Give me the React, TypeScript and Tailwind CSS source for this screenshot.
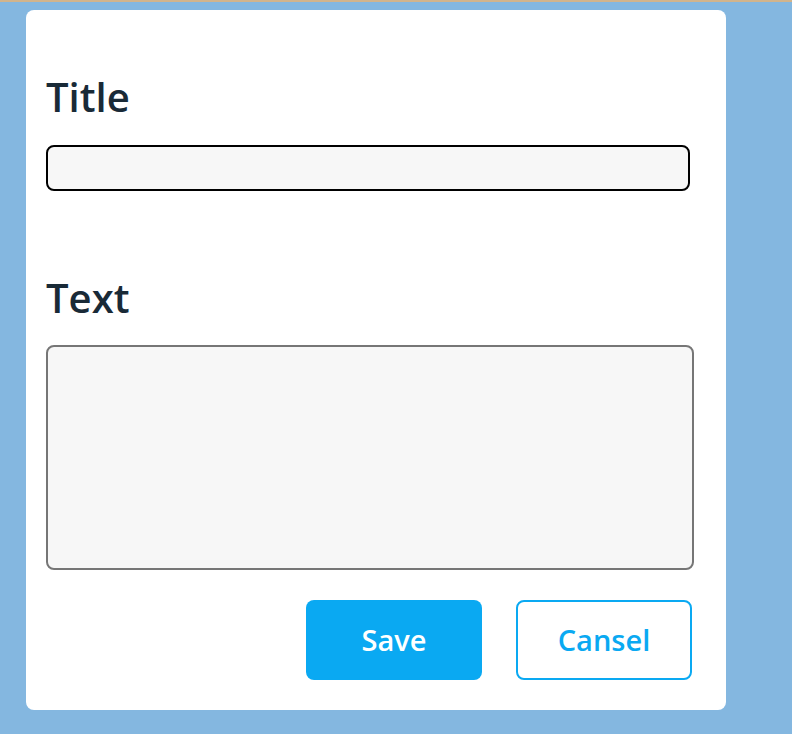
export default function App() {
  return (
    <div
      className="min-h-screen bg-[#84b7e0] border-t-2 border-[#d2b48c] pt-2 pl-[26px]"
      style={{ fontFamily: '"Open Sans", "Noto Sans", sans-serif' }}
    >
      <div className="w-[700px] h-[700px] bg-white rounded-lg pt-[67px] pl-5 pr-[34px] flex flex-col">
        <label className="text-[40px] leading-none font-semibold text-[#192a37]">Title</label>
        <input
          type="text"
          className="mt-[28px] w-[644px] h-[46px] rounded-lg border-2 border-black bg-[#f7f7f7] px-3 outline-none"
        />

        <label className="mt-[87px] text-[40px] leading-none font-semibold text-[#192a37]">Text</label>
        <textarea className="mt-[27px] w-[648px] h-[225px] rounded-lg border-2 border-[#767676] bg-[#f7f7f7] p-3 resize-none outline-none" />

        <div className="mt-[30px] flex justify-end gap-[34px]">
          <button className="w-[176px] h-20 rounded-lg bg-[#0aa9f2] text-white text-[29px] font-semibold">
            Save
          </button>
          <button className="w-[176px] h-20 rounded-lg border-2 border-[#0aa9f2] bg-white text-[#0aa9f2] text-[29px] font-semibold">
            Cansel
          </button>
        </div>
      </div>
    </div>
  )
}
